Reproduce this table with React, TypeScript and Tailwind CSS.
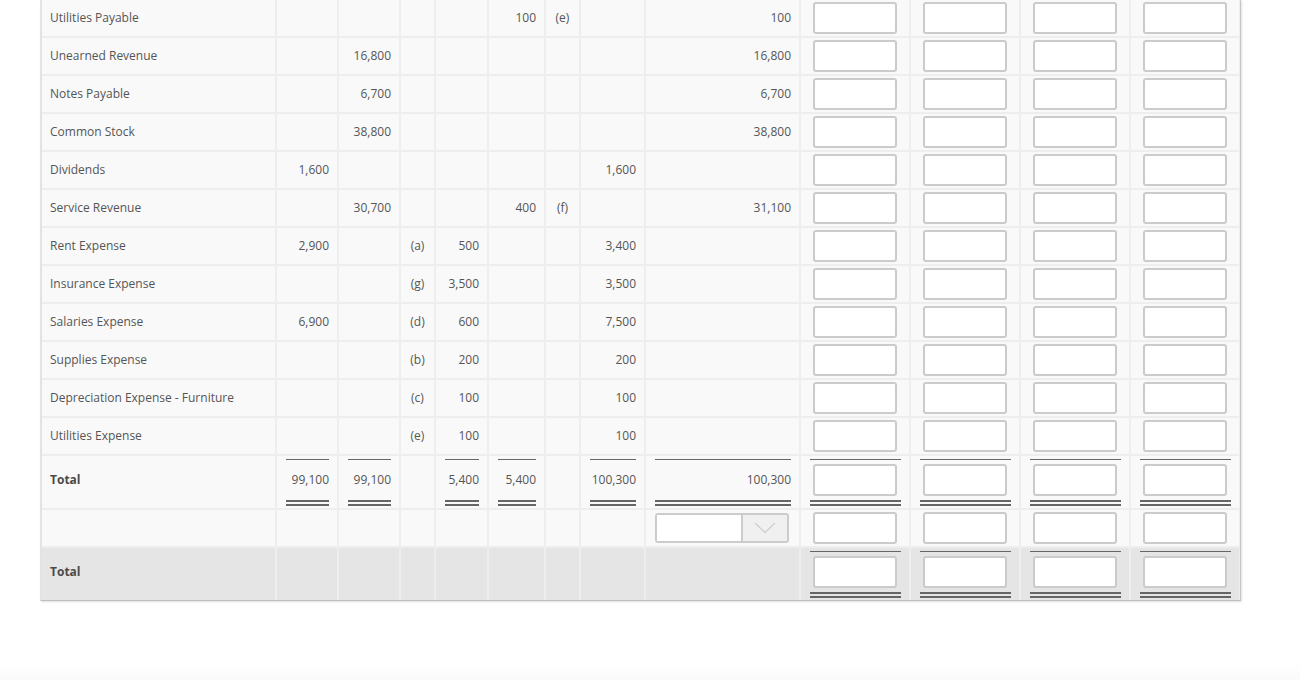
import React from "react";

type Row = string[];

const rows: Row[] = [
  ["Utilities Payable", "", "", "", "", "100", "(e)", "", "100"],
  ["Unearned Revenue", "", "16,800", "", "", "", "", "", "16,800"],
  ["Notes Payable", "", "6,700", "", "", "", "", "", "6,700"],
  ["Common Stock", "", "38,800", "", "", "", "", "", "38,800"],
  ["Dividends", "1,600", "", "", "", "", "", "1,600", ""],
  ["Service Revenue", "", "30,700", "", "", "400", "(f)", "", "31,100"],
  ["Rent Expense", "2,900", "", "(a)", "500", "", "", "3,400", ""],
  ["Insurance Expense", "", "", "(g)", "3,500", "", "", "3,500", ""],
  ["Salaries Expense", "6,900", "", "(d)", "600", "", "", "7,500", ""],
  ["Supplies Expense", "", "", "(b)", "200", "", "", "200", ""],
  ["Depreciation Expense - Furniture", "", "", "(c)", "100", "", "", "100", ""],
  ["Utilities Expense", "", "", "(e)", "100", "", "", "100", ""],
];

const totals: string[] = ["Total", "99,100", "99,100", "", "5,400", "5,400", "", "100,300", "100,300"];

function Input() {
  return <div className="w-[84px] h-[32px] shrink-0 bg-white border-2 border-[#cbcbcb] rounded-[3px]" />;
}

function DoubleLine() {
  return (
    <div className="flex flex-col">
      <div className="h-[2px] bg-[#666666]" />
      <div className="h-[2px]" />
      <div className="h-[2px] bg-[#666666]" />
    </div>
  );
}

function TotalCell({ children, center, bg }: { children?: React.ReactNode; center?: boolean; bg: string }) {
  return (
    <div className={`${bg} pt-[3px] pl-[9px] pr-[8px]`}>
      <div className="border-t border-[#666666]">
        <div className={`h-[40px] flex items-center ${center ? "justify-start pl-[3px]" : "justify-end"}`}>{children}</div>
        <DoubleLine />
      </div>
    </div>
  );
}

function Select() {
  return (
    <div className="w-[134px] h-[30px] flex border-2 border-[#cccccc] rounded-[3px] bg-white overflow-hidden">
      <div className="flex-1 bg-white" />
      <div className="w-[46px] bg-[#f0f0f0] border-l-2 border-[#cccccc] flex items-center justify-center">
        <svg width="22" height="12" viewBox="0 0 22 12" fill="none">
          <path d="M1 1 L11 10.5 L21 1" stroke="#cfcfcf" strokeWidth="1.3" />
        </svg>
      </div>
    </div>
  );
}

export default function App() {
  const cell = "bg-[#f9f9f9]";
  return (
    <div className="w-[1300px] h-[680px] bg-white overflow-hidden text-[12px] text-[#555555]" style={{ fontFamily: "'Open Sans', 'Noto Sans', sans-serif" }}>
      <div className="ml-[40px] w-[1201px] border-l-2 border-[#e3e3e3] border-r border-b border-r-[#c6c6c6] border-b-[#bdbdbd] shadow-[1px_1px_2px_rgba(0,0,0,0.12)] bg-[#eeeeee]">
        <div className="grid grid-cols-[233px_60px_60px_33px_51px_55px_33px_63px_153px_108px_108px_108px_108px] gap-[2px]">
          {rows.map((r, ri) => (
            <React.Fragment key={ri}>
              {r.map((v, ci) => {
                if (ci === 0)
                  return (
                    <div key={ci} className={`${cell} h-[36px] flex items-center pl-[8px] whitespace-nowrap`}>
                      {v}
                    </div>
                  );
                if (ci === 3 || ci === 6)
                  return (
                    <div key={ci} className={`${cell} h-[36px] flex items-center justify-center`}>
                      {v}
                    </div>
                  );
                return (
                  <div key={ci} className={`${cell} h-[36px] flex items-center justify-end pr-[8px]`}>
                    {v}
                  </div>
                );
              })}
              {[0, 1, 2, 3].map((k) => (
                <div key={`i${k}`} className={`${cell} h-[36px] flex items-center pl-[12px]`}>
                  <Input />
                </div>
              ))}
            </React.Fragment>
          ))}

          {/* Total row */}
          {totals.map((v, ci) => {
            if (ci === 0)
              return (
                <div key={`t${ci}`} className={`${cell} h-[52px] pt-[3px] pl-[8px]`}>
                  <div className="h-[41px] flex items-center font-bold text-[#4a4a4a]">{v}</div>
                </div>
              );
            if (ci === 3 || ci === 6) return <div key={`t${ci}`} className={`${cell} h-[52px]`} />;
            return (
              <TotalCell key={`t${ci}`} bg={cell}>
                {v}
              </TotalCell>
            );
          })}
          {[0, 1, 2, 3].map((k) => (
            <TotalCell key={`ti${k}`} bg={cell} center>
              <Input />
            </TotalCell>
          ))}

          {/* Dropdown row */}
          {[0, 1, 2, 3, 4, 5, 6, 7].map((k) => (
            <div key={`d${k}`} className={`${cell} h-[36px]`} />
          ))}
          <div className={`${cell} h-[36px] flex items-center pl-[9px]`}>
            <Select />
          </div>
          {[0, 1, 2, 3].map((k) => (
            <div key={`di${k}`} className={`${cell} h-[36px] flex items-center pl-[12px]`}>
              <Input />
            </div>
          ))}

          {/* Gray total row */}
          <div className="bg-[#e5e5e5] h-[52px] pt-[3px] pl-[8px]">
            <div className="h-[41px] flex items-center font-bold text-[#4a4a4a]">Total</div>
          </div>
          {[1, 2, 3, 4, 5, 6, 7, 8].map((k) => (
            <div key={`g${k}`} className="bg-[#e5e5e5] h-[52px]" />
          ))}
          {[0, 1, 2, 3].map((k) => (
            <TotalCell key={`gi${k}`} bg="bg-[#e5e5e5]" center>
              <Input />
            </TotalCell>
          ))}
        </div>
      </div>
      <div className="mt-[62px] h-[18px] bg-linear-to-b from-[#ffffff] to-[#fafafa]" />
    </div>
  );
}
